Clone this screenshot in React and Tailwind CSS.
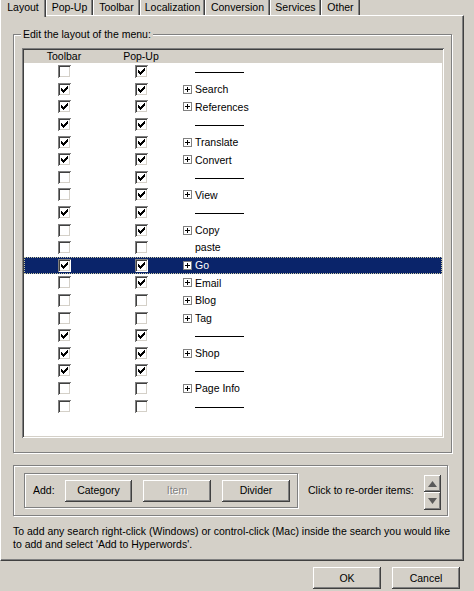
import React from 'react';

const raised =
  'shadow-[inset_-1px_-1px_0_#404040,inset_1px_1px_0_#ffffff,inset_-2px_-2px_0_#808080,inset_2px_2px_0_#d4d0c8]';
const sunken =
  'shadow-[inset_1px_1px_0_#808080,inset_-1px_-1px_0_#ffffff,inset_2px_2px_0_#404040,inset_-2px_-2px_0_#d4d0c8]';
const etched =
  'border border-[#808080] shadow-[inset_1px_1px_0_#ffffff,1px_1px_0_#ffffff]';

const tabs = [
  { name: 'Layout', w: 'w-[46px]', active: true },
  { name: 'Pop-Up', w: 'w-[47px]' },
  { name: 'Toolbar', w: 'w-[47px]' },
  { name: 'Localization', w: 'w-[65px]' },
  { name: 'Conversion', w: 'w-[65px]' },
  { name: 'Services', w: 'w-[51px]' },
  { name: 'Other', w: 'w-[39px]' },
];

// toolbar, popup, label ('-' = divider), expandable, selected
const rows = [
  [0, 1, '-'],
  [1, 1, 'Search', true],
  [1, 1, 'References', true],
  [1, 1, '-'],
  [1, 1, 'Translate', true],
  [1, 1, 'Convert', true],
  [0, 1, '-'],
  [0, 1, 'View', true],
  [1, 1, '-'],
  [0, 1, 'Copy', true],
  [0, 0, 'paste', false],
  [1, 1, 'Go', true, true],
  [0, 1, 'Email', true],
  [0, 0, 'Blog', true],
  [0, 0, 'Tag', true],
  [1, 1, '-'],
  [1, 1, 'Shop', true],
  [1, 1, '-'],
  [0, 0, 'Page Info', true],
  [0, 0, '-'],
];

const checkPixels = [
  [6, 0, 1], [5, 1, 2], [0, 2, 1], [4, 2, 3], [0, 3, 2], [3, 3, 3], [0, 4, 5], [1, 5, 3], [2, 6, 1],
];

const Checkbox = ({ checked }) => (
  <div className={`w-[13px] h-[13px] bg-white ${sunken} flex items-center justify-center`}>
    {checked ? (
      <svg width="7" height="7" viewBox="0 0 7 7" shapeRendering="crispEdges">
        {checkPixels.map(([x, y, w], i) => (
          <rect key={i} x={x} y={y} width={w} height="1" fill="#000" />
        ))}
      </svg>
    ) : null}
  </div>
);

const Expander = () => (
  <svg width="9" height="9" viewBox="0 0 9 9" shapeRendering="crispEdges" className="flex-shrink-0">
    <rect x="0.5" y="0.5" width="8" height="8" fill="#fff" stroke="#808080" />
    <rect x="2" y="4" width="5" height="1" fill="#000" />
    <rect x="4" y="2" width="1" height="5" fill="#000" />
  </svg>
);

const Button = ({ children, disabled, className = '' }) => (
  <div
    className={`h-[22px] flex items-center justify-center bg-[#d4d0c8] ${raised} ${
      disabled ? 'text-[#808080] [text-shadow:1px_1px_0_#fff]' : ''
    } ${className}`}
  >
    {children}
  </div>
);

export default function App() {
  return (
    <div className="w-[474px] h-[591px] overflow-hidden bg-[#d4d0c8] text-black text-[10.5px] leading-none font-['Liberation_Sans',Arial,sans-serif] flex flex-col">
      {/* Tabs */}
      <div className="flex items-end h-[15px]">
        {tabs.map((t) =>
          t.active ? (
            <div
              key={t.name}
              className={`${t.w} h-[17px] -mb-[2px] relative z-10 bg-[#d4d0c8] border-l border-white border-r border-r-[#404040] shadow-[inset_-1px_0_0_#808080] flex items-start justify-center pt-[2px]`}
            >
              {t.name}
            </div>
          ) : (
            <div
              key={t.name}
              className={`${t.w} h-[15px] border-l border-white border-r border-r-[#404040] shadow-[inset_-1px_0_0_#808080] flex items-start justify-center pt-[2px]`}
            >
              {t.name}
            </div>
          )
        )}
      </div>

      {/* Panel */}
      <div className="w-[464px] h-[546px] border-t border-l border-white border-r border-b border-r-[#404040] border-b-[#404040] shadow-[inset_-1px_-1px_0_#808080] pl-[12px] pt-[18px]">
        {/* Group: layout */}
        <div className={`relative w-[439px] h-[419px] ${etched} pl-[8px] pt-[13px]`}>
          <span className="absolute -top-[6px] left-[7px] px-[2px] bg-[#d4d0c8]">Edit the layout of the menu:</span>

          <div className={`w-[422px] h-[390px] bg-white ${sunken} p-[2px] flex flex-col`}>
            <div className="h-[13px] bg-[#d4d0c8] flex items-center">
              <div className="w-[80px] text-center">Toolbar</div>
              <div className="w-[74px] text-center">Pop-Up</div>
            </div>
            {rows.map(([tb, pu, label, exp, sel], i) => (
              <div
                key={i}
                className={`h-[17.6px] flex items-center ${
                  sel ? 'bg-[#0a246a] text-white outline outline-1 outline-dotted outline-[#c8c8a0] -outline-offset-1' : ''
                }`}
              >
                <div className="w-[80px] flex justify-center">
                  <Checkbox checked={tb} />
                </div>
                <div className="w-[74px] flex justify-center">
                  <Checkbox checked={pu} />
                </div>
                {label === '-' ? (
                  <div className="pl-[17px] pt-[2px]">
                    <div className="w-[49px] h-px bg-black" />
                  </div>
                ) : exp ? (
                  <div className="pl-[5px] flex items-center gap-[3px]">
                    <Expander />
                    <span>{label}</span>
                  </div>
                ) : (
                  <div className="pl-[17px]">{label}</div>
                )}
              </div>
            ))}
          </div>
        </div>

        {/* Group: add / reorder */}
        <div className={`mt-[12px] w-[435px] h-[51px] ${etched} flex`}>
          <div className={`ml-[10px] mt-[7px] w-[274px] h-[35px] ${etched} flex items-center pl-[8px]`}>
            <span className="w-[32px]">Add:</span>
            <Button className="w-[67px]">Category</Button>
            <Button disabled className="w-[68px] ml-[11px]">Item</Button>
            <Button className="w-[68px] ml-[11px]">Divider</Button>
          </div>
          <div className="ml-[10px] h-full flex items-center">Click to re-order items:</div>
          <div className="ml-[10px] mt-[9px] flex flex-col">
            <div className={`w-[17px] h-[17px] ${raised} flex items-center justify-center`}>
              <svg width="9" height="6" viewBox="0 0 9 6">
                <path d="M4.5 0L9 6H0z" fill="#5a5a5a" />
              </svg>
            </div>
            <div className={`w-[17px] h-[18px] ${raised} flex items-center justify-center`}>
              <svg width="9" height="6" viewBox="0 0 9 6">
                <path d="M0 0H9L4.5 6z" fill="#5a5a5a" />
              </svg>
            </div>
          </div>
        </div>

        <p className="mt-[9px] leading-[13px]">
          To add any search right-click (Windows) or control-click (Mac) inside the search you would like
          <br />
          to add and select 'Add to Hyperwords'.
        </p>
      </div>

      {/* Dialog buttons */}
      <div className="flex justify-end pr-[14px] pt-[6px] gap-[11px]">
        <Button className="w-[68px]">OK</Button>
        <Button className="w-[68px]">Cancel</Button>
      </div>
    </div>
  );
}
